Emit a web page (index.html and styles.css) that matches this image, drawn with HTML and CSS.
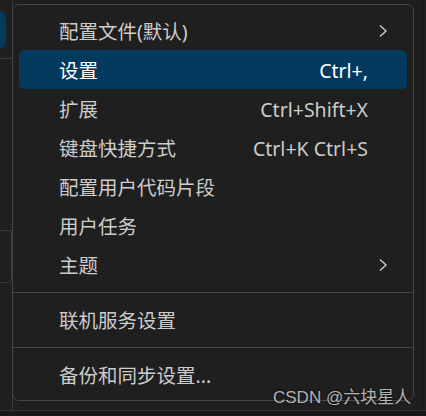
FILE: index.html
```html
<!DOCTYPE html>
<html lang="zh">
<head>
<meta charset="utf-8">
<link rel="stylesheet" href="styles.css">
</head>
<body>
<div class="window">
  <div class="workbench">
    <aside class="sidebar">
      <div class="sb-top"><span class="pill"></span></div>
      <div class="sb-mid"></div>
      <div class="sb-box"></div>
    </aside>
    <main class="editor"></main>
    <aside class="rightbar"><div class="scroll"></div></aside>
  </div>
  <footer class="status"></footer>

  <nav class="menu">
    <div class="item"><span class="label">配置文件(默认)</span><span class="arrow"><svg width="10" height="14" viewBox="0 0 10 14"><path d="M2 1.5 L8 7 L2 12.5" fill="none" stroke="#cccccc" stroke-width="1.4"/></svg></span></div>
    <div class="item active"><span class="label">设置</span><span class="key">Ctrl+,</span></div>
    <div class="item"><span class="label">扩展</span><span class="key">Ctrl+Shift+X</span></div>
    <div class="item"><span class="label">键盘快捷方式</span><span class="key">Ctrl+K Ctrl+S</span></div>
    <div class="item"><span class="label">配置用户代码片段</span></div>
    <div class="item"><span class="label">用户任务</span></div>
    <div class="item"><span class="label">主题</span><span class="arrow"><svg width="10" height="14" viewBox="0 0 10 14"><path d="M2 1.5 L8 7 L2 12.5" fill="none" stroke="#cccccc" stroke-width="1.4"/></svg></span></div>
    <div class="sep"></div>
    <div class="item"><span class="label">联机服务设置</span></div>
    <div class="sep"></div>
    <div class="item"><span class="label">备份和同步设置...</span></div>
  </nav>

  <div class="watermark">CSDN @六块星人</div>
</div>
</body>
</html>
```

FILE: styles.css
```css
* { box-sizing: border-box; margin: 0; padding: 0; }
html, body { width: 426px; height: 416px; overflow: hidden; background: #1f1f1f; }
body { font-family: "Noto Sans", "Noto Sans CJK SC", sans-serif; }

.window { position: relative; width: 426px; height: 416px; display: flex; flex-direction: column; }
.workbench { flex: 1; display: flex; }
.sidebar { width: 13px; border-right: 1px solid #3a3a3a; display: flex; flex-direction: column; }
.sb-top { height: 59px; border-bottom: 1px solid #3a3a3a; padding-top: 12px; }
.pill { display: block; width: 6px; height: 36px; background: #04395e; border-radius: 0 5px 5px 0; }
.sb-mid { height: 172px; border-bottom: 1px solid #3a3a3a; }
.sb-box { height: 52px; border-bottom: 1px solid #3a3a3a; border-right: 1px solid #3a3a3a; border-bottom-right-radius: 5px; width: 12px; }
.editor { flex: 1; }
.rightbar { width: 13px; display: flex; justify-content: flex-end; }
.scroll { width: 4px; border-left: 2px solid #181818; background: #1f1f1f; }
.status { height: 6px; border-top: 1px solid #333; background: #181818; }

.menu {
  position: absolute; left: 12px; top: 4px; width: 402px; height: 397px;
  background: #1f1f1f; border: 1px solid #454545; border-radius: 7px;
  padding: 6px 0 5px;
  color: #cccccc; font-size: 19.5px;
}
.item {
  height: 39px; margin: 0 6px; padding: 0 20px 0 40px;
  display: flex; align-items: center; border-radius: 5px;
  line-height: 1; padding-top: 2px;
}
.item.active { background: #04395e; color: #ffffff; }
.label { flex: 1; white-space: nowrap; }
.key { margin-right: 19px; white-space: nowrap; }
.arrow { display: flex; margin-right: -1px; margin-top: -2px; }
.sep { height: 16px; display: flex; align-items: center; }
.sep::before { content: ""; display: block; width: 100%; border-top: 1px solid #454545; }

.watermark {
  position: absolute; left: 273px; top: 383px;
  font-family: "Liberation Sans", "Noto Sans CJK SC", sans-serif; font-size: 17px;
  color: rgba(235, 235, 235, 0.75); text-shadow: 0 0 2px rgba(0,0,0,0.9);
  white-space: nowrap;
}
```
